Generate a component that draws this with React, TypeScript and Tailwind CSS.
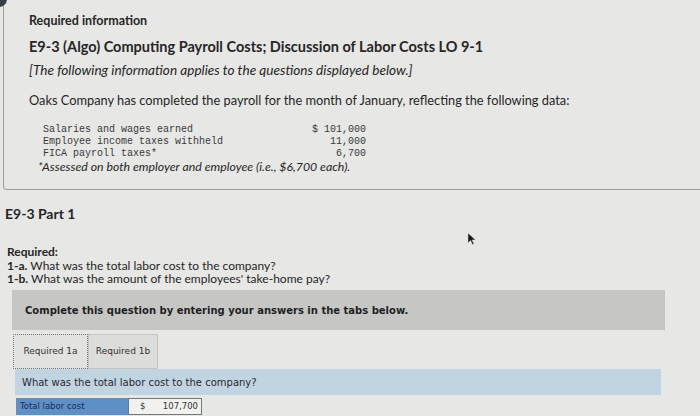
import React from "react";

const rows = [
    { label: "Salaries and wages earned", amount: "$ 101,000" },
    { label: "Employee income taxes withheld", amount: "11,000" },
    { label: "FICA payroll taxes*", amount: "6,700" },
];

const App: React.FC = () => {
    return (
        <div className="relative w-[700px] h-[416px] overflow-hidden bg-[#e7e7e5] text-[#262626] font-['Lato','Open_Sans',sans-serif]">
            {/* corner badge */}
            <div className="absolute -left-[9px] -top-[9px] w-[16px] h-[16px] rounded-full bg-[#3a3f47]" />

            {/* Required information panel */}
            <div className="ml-[3px] w-[720px] h-[190px] border border-t-0 border-[#9c9c9c] rounded-bl-[4px] pl-[25px] pt-[13px]">
                <p className="text-[12.5px] font-bold leading-[16px]">Required information</p>
                <h1 className="mt-[9px] text-[14.5px] font-bold leading-[18px]">
                    E9-3 (Algo) Computing Payroll Costs; Discussion of Labor Costs LO 9-1
                </h1>
                <p className="mt-[6px] text-[13.6px] italic leading-[16px]">
                    [The following information applies to the questions displayed below.]
                </p>
                <p className="mt-[14px] text-[12.8px] leading-[16px]">
                    Oaks Company has completed the payroll for the month of January, reflecting the following data:
                </p>
                <div className="mt-[16px] ml-[14px] w-[323px] font-['Liberation_Mono',monospace] text-[10px] leading-[12px] text-[#3a3a3a]">
                    {rows.map((r) => (
                        <div key={r.label} className="flex justify-between">
                            <span>{r.label}</span>
                            <span>{r.amount}</span>
                        </div>
                    ))}
                </div>
                <p className="ml-[9px] text-[12.3px] italic leading-[13px]">
                    *Assessed on both employer and employee (i.e., $6,700 each).
                </p>
            </div>

            <h2 className="mt-[15px] ml-[5px] text-[14px] font-bold leading-[18px]">E9-3 Part 1</h2>

            <div className="mt-[22px] ml-[7px] text-[12px] leading-[13.5px]">
                <p className="font-bold">Required:</p>
                <p><span className="font-bold">1-a.</span> What was the total labor cost to the company?</p>
                <p><span className="font-bold">1-b.</span> What was the amount of the employees' take-home pay?</p>
            </div>

            <div className="mt-[4.5px] ml-[12px] w-[653px] h-[40px] bg-[#c6c6c5] flex items-center pl-[13px] font-['DejaVu_Sans',sans-serif] text-[10px] font-bold text-[#1f1f1f]">
                Complete this question by entering your answers in the tabs below.
            </div>

            <div className="mt-[4px] ml-[13px] flex font-['DejaVu_Sans',sans-serif] text-[9px] text-[#333]">
                <div className="w-[75px] h-[35px] border border-dotted border-[#777] bg-[#e2e2e0] flex items-center justify-center">
                    Required 1a
                </div>
                <div className="w-[70px] h-[35px] border border-[#c4c4c4] bg-[#dcdcda] flex items-center justify-center">
                    Required 1b
                </div>
            </div>

            <div className="ml-[15px] w-[646px] h-[26px] bg-[#c1d4e2] flex items-center pl-[7px] font-['DejaVu_Sans',sans-serif] text-[10px] text-[#2a2a2a]">
                What was the total labor cost to the company?
            </div>

            <div className="mt-[3px] ml-[16px] flex font-['DejaVu_Sans',sans-serif] text-[8.5px]">
                <div className="w-[112px] h-[17px] bg-[#5e8fc6] flex items-center pl-[4px] text-[#16305a]">
                    Total labor cost
                </div>
                <div className="w-[74px] h-[17px] border border-[#777] bg-[#f1f1ef] flex items-center justify-between px-[3px] text-[#333]">
                    <span className="ml-[8px]">$</span>
                    <span>107,700</span>
                </div>
            </div>

            {/* mouse pointer */}
            <svg className="absolute left-[467px] top-[232px]" width="9" height="13" viewBox="0 0 9 13">
                <path d="M1 1 L1 11 L3.5 8.5 L5.5 12.5 L7 11.8 L5 8 L8.5 8 Z" fill="#1a1a1a" stroke="#ddd" strokeWidth="0.5" />
            </svg>
        </div>
    );
};

export default App;
